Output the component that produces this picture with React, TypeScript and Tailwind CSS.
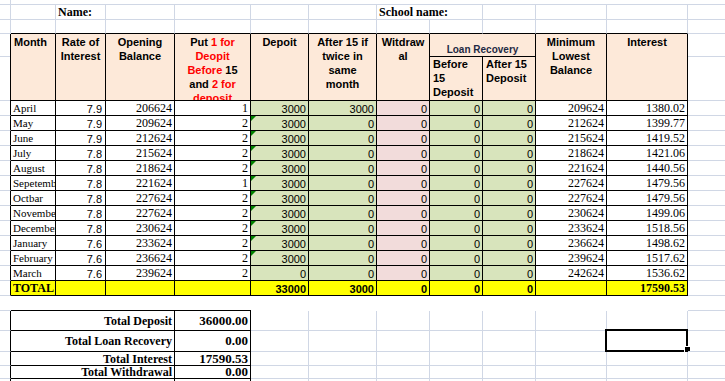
import { ReactNode } from "react";

const cols = "grid grid-cols-[11px_45px_50px_69px_76px_58px_68px_53px_53px_53px_71px_81px_37px]";

type Edge = "g" | "k" | "n";
const rightB: Record<Edge, string> = { g: "border-r border-r-[#d0d7e5]", k: "border-r border-r-black", n: "" };
const bottomB: Record<Edge, string> = { g: "border-b border-b-[#d0d7e5]", k: "border-b border-b-black", n: "" };
const spans: Record<number, string> = { 1: "", 2: "col-span-2", 3: "col-span-3", 5: "col-span-5" };

const serif = "font-['Liberation_Serif',serif] text-[12px] leading-[14px]";
const monthFont = "font-['Liberation_Serif',serif] text-[11px] leading-[14px]";
const sans = "font-['Liberation_Sans',Arial,sans-serif] text-[11px] leading-[13px] pt-[2px]";
const head = "font-['Liberation_Sans',Arial,sans-serif] font-bold text-[11px] leading-[14px] text-black";
const peach = "bg-[#fde9d9]";
const green = "bg-[#d8e4bc]";
const pink = "bg-[#f2dcdb]";

function Cell({ r = "g", b = "g", span = 1, className = "", children }: { r?: Edge; b?: Edge; span?: number; className?: string; children?: ReactNode }) {
    return (
        <div className={`${rightB[r]} ${bottomB[b]} ${spans[span]} relative overflow-hidden whitespace-nowrap ${className}`}>
            {children}
        </div>
    );
}

const rows = [
    { m: "April", rate: "7.9", open: 206624, put: 1, dep: 3000, after: 3000, min: 209624, int: "1380.02" },
    { m: "May", rate: "7.9", open: 209624, put: 2, dep: 3000, after: 0, min: 212624, int: "1399.77" },
    { m: "June", rate: "7.9", open: 212624, put: 2, dep: 3000, after: 0, min: 215624, int: "1419.52" },
    { m: "July", rate: "7.8", open: 215624, put: 2, dep: 3000, after: 0, min: 218624, int: "1421.06" },
    { m: "August", rate: "7.8", open: 218624, put: 2, dep: 3000, after: 0, min: 221624, int: "1440.56" },
    { m: "Sepetember", rate: "7.8", open: 221624, put: 1, dep: 3000, after: 0, min: 227624, int: "1479.56" },
    { m: "Octbar", rate: "7.8", open: 227624, put: 2, dep: 3000, after: 0, min: 227624, int: "1479.56" },
    { m: "November", rate: "7.8", open: 227624, put: 2, dep: 3000, after: 0, min: 230624, int: "1499.06" },
    { m: "December", rate: "7.8", open: 230624, put: 2, dep: 3000, after: 0, min: 233624, int: "1518.56" },
    { m: "January", rate: "7.6", open: 233624, put: 2, dep: 3000, after: 0, min: 236624, int: "1498.62" },
    { m: "February", rate: "7.6", open: 236624, put: 2, dep: 3000, after: 0, min: 239624, int: "1517.62" },
    { m: "March", rate: "7.6", open: 239624, put: 2, dep: 0, after: 0, min: 242624, int: "1536.62" },
];

const summary = [
    { label: "Total Deposit", value: "36000.00", h: "h-[20px]" },
    { label: "Total Loan Recovery", value: "0.00", h: "h-[21px]", sel: true },
    { label: "Total Interest", value: "17590.53", h: "h-[14px]" },
    { label: "Total Withdrawal", value: "0.00", h: "h-[13px]" },
];

export default function App() {
    return (
        <div className="w-[725px] h-[381px] overflow-hidden bg-white text-black">
            {/* top spreadsheet rows */}
            <div className={`${cols} h-[5px]`}>
                <Cell r="g" />
                <Cell r="n" span={5} />
                <Cell r="n" span={5} />
                <Cell r="n" span={2} />
            </div>
            <div className={`${cols} h-[15px]`}>
                <Cell />
                <Cell />
                <Cell className={`${serif} font-bold pl-[2px]`}>Name:</Cell>
                <Cell />
                <Cell />
                <Cell />
                <Cell />
                <Cell span={2} className={`${serif} font-bold pl-[2px]`}>School name:</Cell>
                <Cell />
                <Cell />
                <Cell />
                <Cell r="n" />
            </div>
            <div className={`${cols} h-[14px]`}>
                <Cell />
                <Cell b="k" />
                <Cell b="k" />
                <Cell b="k" />
                <Cell b="k" />
                <Cell b="k" />
                <Cell b="k" />
                <Cell b="k" />
                <Cell b="k" />
                <Cell b="k" />
                <Cell b="k" />
                <Cell b="k" />
                <Cell r="n" />
            </div>

            {/* header */}
            <div className={`${cols} h-[67px]`}>
                <div className="flex flex-col border-r border-r-black">
                    <div className="h-[23px] border-b border-b-[#d0d7e5]" />
                    <div className="flex-1 border-b border-b-[#d0d7e5]" />
                </div>
                <Cell r="k" b="k" className={`${head} ${peach} pl-[3px] pt-[1px]`}>Month</Cell>
                <Cell r="k" b="k" className={`${head} ${peach} text-center pt-[1px]`}>Rate of<br />Interest</Cell>
                <Cell r="k" b="k" className={`${head} ${peach} text-center pt-[1px]`}>Opening<br />Balance</Cell>
                <Cell r="k" b="k" className={`${head} ${peach} text-center pt-[1px]`}>
                    Put <span className="text-[#ff0000]">1 for</span><br />
                    <span className="text-[#ff0000]">Deopit</span><br />
                    <span className="text-[#ff0000]">Before</span> 15<br />
                    and <span className="text-[#ff0000]">2 for</span><br />
                    <span className="text-[#ff0000]">deposit</span>
                </Cell>
                <Cell r="k" b="k" className={`${head} ${peach} text-center pt-[1px]`}>Depoit</Cell>
                <Cell r="k" b="k" className={`${head} ${peach} text-center pt-[1px]`}>After 15 if<br />twice in<br />same<br />month</Cell>
                <Cell r="k" b="k" className={`${head} ${peach} text-center pt-[1px]`}>Witdraw<br />al</Cell>
                <div className={`col-span-2 flex flex-col border-r border-r-black border-b border-b-black ${peach}`}>
                    <div className="h-[23px] border-b border-b-black flex items-end justify-center pb-[1px] font-['Liberation_Sans',Arial,sans-serif] font-bold text-[10px] leading-[11px] text-[#1f2a44]">
                        Loan Recovery
                    </div>
                    <div className="flex flex-1">
                        <div className={`w-[53px] border-r border-r-black pl-[3px] ${head}`}>Before<br />15<br />Deposit</div>
                        <div className={`flex-1 pl-[3px] ${head}`}>After 15<br />Deposit</div>
                    </div>
                </div>
                <Cell r="k" b="k" className={`${head} ${peach} text-center pt-[1px]`}>Minimum<br />Lowest<br />Balance</Cell>
                <Cell r="k" b="k" className={`${head} ${peach} text-center pt-[1px]`}>Interest</Cell>
                <div className="flex flex-col">
                    <div className="h-[23px] border-b border-b-[#d0d7e5]" />
                    <div className="flex-1 border-b border-b-[#d0d7e5]" />
                </div>
            </div>

            {/* data rows */}
            {rows.map((d, i) => (
                <div key={d.m} className={`${cols} h-[15px]`}>
                    <Cell r="k" />
                    <Cell r="k" b="k" className={`${monthFont} pl-[2px]`}>{d.m}</Cell>
                    <Cell r="k" b="k" className={`${sans} text-right pr-[3px]`}>{d.rate}</Cell>
                    <Cell r="k" b="k" className={`${serif} text-right pr-[2px]`}>{d.open}</Cell>
                    <Cell r="k" b="k" className={`${serif} text-right pr-[2px]`}>{d.put}</Cell>
                    <Cell r="k" b="k" className={`${sans} ${green} text-right pr-[2px]`}>
                        {i > 0 && i < 11 && (
                            <span className="absolute left-0 top-0 border-t-[5px] border-r-[5px] border-t-[#008000] border-r-transparent" />
                        )}
                        {d.dep}
                    </Cell>
                    <Cell r="k" b="k" className={`${sans} ${green} text-right pr-[2px]`}>{d.after}</Cell>
                    <Cell r="k" b="k" className={`${sans} ${pink} text-right pr-[2px]`}>0</Cell>
                    <Cell r="k" b="k" className={`${sans} ${green} text-right pr-[2px]`}>0</Cell>
                    <Cell r="k" b="k" className={`${sans} ${green} text-right pr-[2px]`}>0</Cell>
                    <Cell r="k" b="k" className={`${serif} text-right pr-[2px]`}>{d.min}</Cell>
                    <Cell r="k" b="k" className={`${serif} text-right pr-[2px]`}>{d.int}</Cell>
                    <Cell r="n" />
                </div>
            ))}

            {/* total row */}
            <div className={`${cols} h-[15px]`}>
                <Cell r="k" />
                <Cell r="k" b="k" className={`${serif} font-bold bg-[#ffff00] pl-[2px]`}>TOTAL</Cell>
                <Cell r="k" b="k" className="bg-[#ffff00]" />
                <Cell r="k" b="k" className="bg-[#ffff00]" />
                <Cell r="k" b="k" className="bg-[#ffff00]" />
                <Cell r="k" b="k" className={`${sans} font-bold bg-[#ffff00] text-right pr-[2px]`}>33000</Cell>
                <Cell r="k" b="k" className={`${sans} font-bold bg-[#ffff00] text-right pr-[2px]`}>3000</Cell>
                <Cell r="k" b="k" className={`${sans} font-bold bg-[#ffff00] text-right pr-[2px]`}>0</Cell>
                <Cell r="k" b="k" className={`${sans} font-bold bg-[#ffff00] text-right pr-[2px]`}>0</Cell>
                <Cell r="k" b="k" className={`${sans} font-bold bg-[#ffff00] text-right pr-[2px]`}>0</Cell>
                <Cell r="k" b="k" className="bg-[#ffff00]" />
                <Cell r="k" b="k" className={`${serif} font-bold bg-[#ffff00] text-right pr-[2px]`}>17590.53</Cell>
                <Cell r="n" />
            </div>

            {/* gap row above summary */}
            <div className={`${cols} h-[15px]`}>
                <Cell r="n" />
                <Cell r="n" b="k" span={3} />
                <Cell r="n" b="k" />
                <Cell r="n" b="n" span={5} />
                <Cell r="n" b="n" />
                <Cell r="n" b="n" />
                <Cell r="n" />
            </div>

            {/* summary block */}
            {summary.map((s) => (
                <div key={s.label} className={`${cols} ${s.h}`}>
                    <Cell r="k" />
                    <Cell r="k" b="k" span={3} className={`${serif} font-bold flex items-center justify-end pr-[2px]`}>{s.label}</Cell>
                    <Cell r="k" b="k" className="font-['Liberation_Serif',serif] font-bold text-[13px] leading-[14px] flex items-center justify-end pr-[2px]">{s.value}</Cell>
                    <Cell />
                    <Cell />
                    <Cell />
                    <Cell />
                    <Cell />
                    <Cell />
                    <div className="border-r border-r-[#d0d7e5] border-b border-b-[#d0d7e5] relative">
                        {s.sel && (
                            <>
                                <div className="absolute left-[-2px] top-[-2px] w-[83px] h-[23px] border-2 border-black" />
                                <div className="absolute left-[77px] top-[15px] w-[7px] h-[7px] bg-black border border-white" />
                            </>
                        )}
                    </div>
                    <Cell r="n" />
                </div>
            ))}
            <div className={`${cols} h-[3px]`}>
                <Cell r="k" b="n" />
                <Cell r="k" b="n" span={3} />
                <Cell r="k" b="n" />
                <Cell b="n" />
                <Cell b="n" />
                <Cell b="n" />
                <Cell b="n" />
                <Cell b="n" />
                <Cell b="n" />
                <Cell b="n" />
                <Cell r="n" b="n" />
            </div>
        </div>
    );
}
